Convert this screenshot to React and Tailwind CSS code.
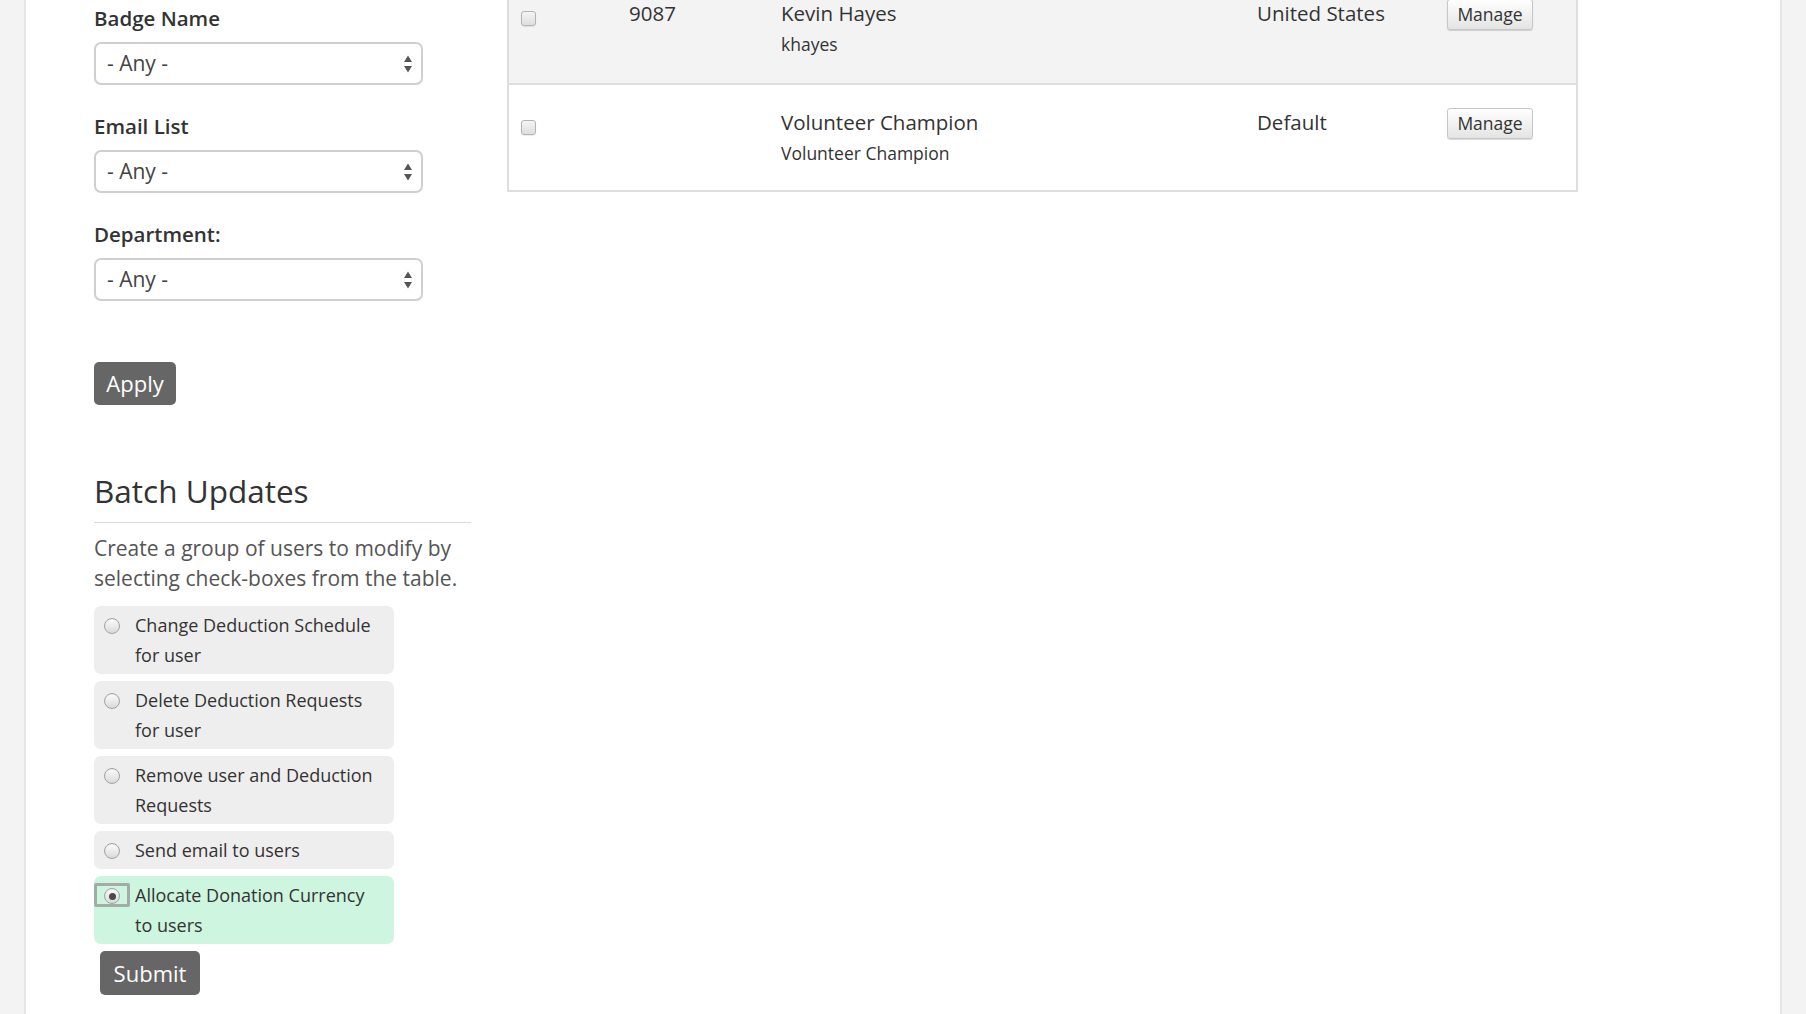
import React from "react";

const filters = ["Badge Name", "Email List", "Department:"];

const options = [
  { label: "Change Deduction Schedule for user" },
  { label: "Delete Deduction Requests for user" },
  { label: "Remove user and Deduction Requests" },
  { label: "Send email to users" },
  { label: "Allocate Donation Currency to users", checked: true },
];

const rows = [
  { id: "9087", name: "Kevin Hayes", sub: "khayes", country: "United States", striped: true },
  { id: "", name: "Volunteer Champion", sub: "Volunteer Champion", country: "Default" },
];

// up/down arrows used by the native-looking selects
const SelectArrows = () => (
  <svg width="10" height="20" viewBox="0 0 10 20" className="shrink-0">
    <path d="M1 8 L5 1.5 L9 8 Z" fill="#555" />
    <path d="M1 12 L5 18.5 L9 12 Z" fill="#555" />
  </svg>
);

const Radio = ({ checked }) => (
  <span className="relative mt-[8px] ml-[10px] shrink-0">
    {checked && (
      <span className="absolute -left-[10px] -top-[5px] w-[36px] h-[24px] border-[3px] border-[#a3ada7] rounded-[2px]"></span>
    )}
    <span className="relative flex items-center justify-center w-[16px] h-[16px] rounded-full border border-[#a2a2a2] bg-gradient-to-b from-[#fdfdfd] to-[#d9d9d9] shadow-[inset_0_1px_1px_rgba(0,0,0,0.06)]">
      {checked && <span className="w-[7px] h-[7px] rounded-full bg-[#4a4a4a]"></span>}
    </span>
  </span>
);

const Checkbox = () => (
  <span className="block w-[15px] h-[15px] rounded-[3px] border border-[#b3b3b3] bg-gradient-to-b from-[#f4f4f4] to-[#dedede] shadow-[0_1px_1px_rgba(0,0,0,0.08)]"></span>
);

export default function App() {
  return (
    <div
      className="flex w-full min-h-[1014px] bg-[#f3f3f3] text-[#333] overflow-hidden"
      style={{ fontFamily: '"Open Sans", "Liberation Sans", sans-serif' }}
    >
      {/* left gutter */}
      <div className="w-[26px] shrink-0 border-r-2 border-[#e6e6e6]"></div>

      {/* page body */}
      <div className="w-[1754px] shrink-0 bg-white flex pl-[68px]">
        {/* sidebar filters */}
        <div className="w-[377px] shrink-0 pt-[4px]">
          <div className="flex flex-col gap-[27px]">
            {filters.map((f) => (
              <div key={f}>
                <div className="text-[20.5px] leading-[28px] font-semibold text-[#333]">{f}</div>
                <div className="mt-[10px] w-[329px] h-[43px] rounded-[7px] border-2 border-[#cfcfcf] flex items-center justify-between pl-[11px] pr-[8px]">
                  <span className="text-[21px] text-[#444]">- Any -</span>
                  <SelectArrows />
                </div>
              </div>
            ))}
          </div>

          <button className="mt-[61px] w-[82px] h-[43px] rounded-[5px] bg-[#666] text-white text-[22px] font-medium">
            Apply
          </button>

          <h2 className="mt-[66px] text-[31.5px] leading-[40px] font-normal text-[#333] pb-[11px] border-b border-[#dcdcdc]">
            Batch Updates
          </h2>
          <p className="mt-[10px] text-[21px] leading-[30px] text-[#555]">
            Create a group of users to modify by selecting check-boxes from the table.
          </p>

          <div className="mt-[13px] flex flex-col gap-[7px]">
            {options.map((o) => (
              <label
                key={o.label}
                className={`flex w-[300px] rounded-[7px] pt-[4px] pb-[4px] pr-[10px] ${
                  o.checked ? "bg-[#cdf5df]" : "bg-[#eeeeee]"
                }`}
              >
                <Radio checked={o.checked} />
                <span className="ml-[15px] text-[18px] leading-[30px] text-[#333]">{o.label}</span>
              </label>
            ))}
          </div>

          <button className="mt-[7px] ml-[6px] w-[100px] h-[44px] rounded-[5px] bg-[#666] text-white text-[22px] font-medium">
            Submit
          </button>
        </div>

        {/* users table */}
        <div className="ml-[36px] w-[1071px] shrink-0 self-start -mt-[26px] border-2 border-[#dedede]">
          {rows.map((r, i) => (
            <div
              key={r.name}
              className={`grid grid-cols-[108px_152px_476px_190px_86px] h-[107px] pl-[12px] pt-[23px] ${
                r.striped ? "bg-[#f3f3f3]" : "bg-white"
              } ${i > 0 ? "border-t-2 border-[#dedede]" : ""}`}
            >
              <div className="pt-[12px]">
                <Checkbox />
              </div>
              <div className="text-[20.5px] leading-[28px]">{r.id}</div>
              <div>
                <div className="text-[20.5px] leading-[28px]">{r.name}</div>
                <div className="mt-[4px] text-[17.5px] leading-[26px]">{r.sub}</div>
              </div>
              <div className="text-[20.5px] leading-[28px]">{r.country}</div>
              <div>
                <button className="w-[86px] h-[31px] rounded-[3px] border border-[#c6c6c6] bg-gradient-to-b from-[#ffffff] to-[#e4e4e4] shadow-[0_1px_1px_rgba(0,0,0,0.15)] text-[17.5px] text-[#333] leading-none">
                  Manage
                </button>
              </div>
            </div>
          ))}
        </div>
      </div>

      {/* right gutter */}
      <div className="flex-1 border-l-2 border-[#e6e6e6]"></div>
    </div>
  );
}
